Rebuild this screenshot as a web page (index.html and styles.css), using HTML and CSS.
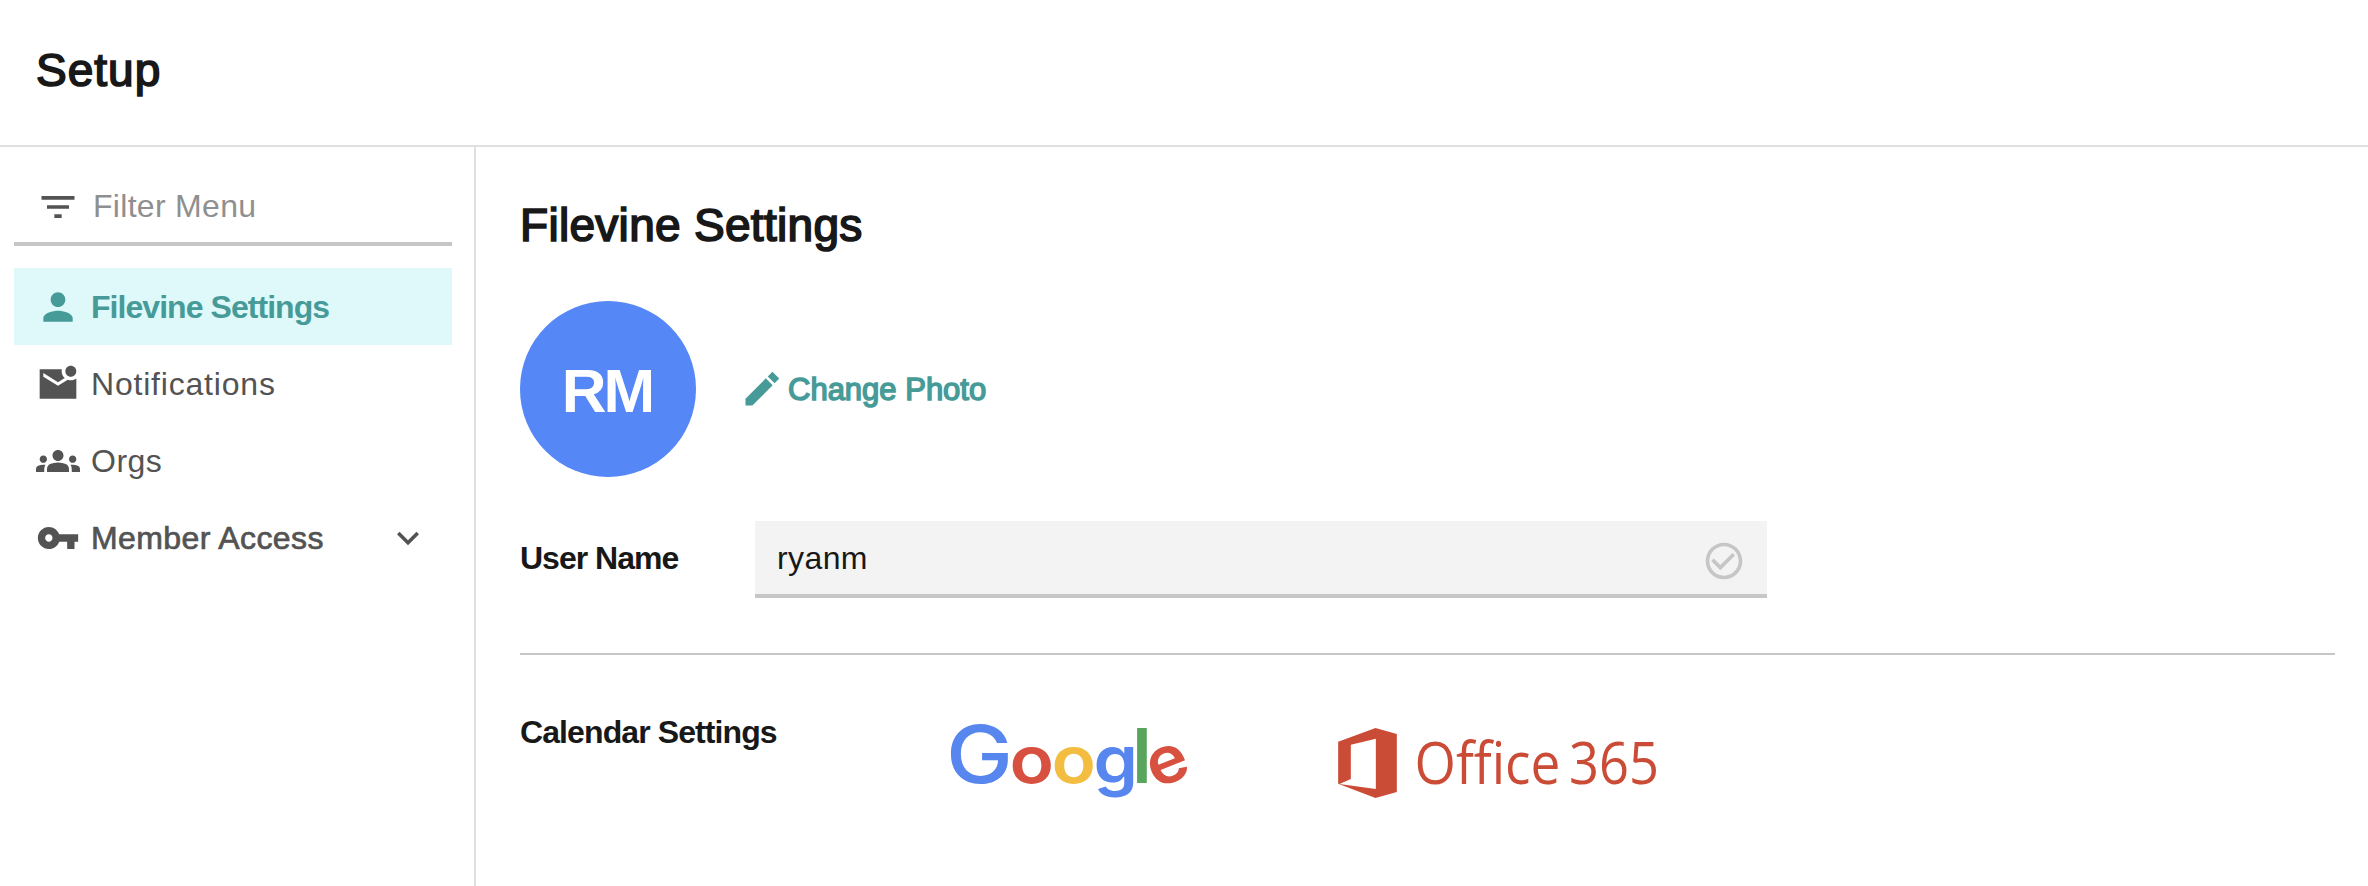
FILE: index.html
```html
<!DOCTYPE html>
<html lang="en">
<head>
    <meta charset="UTF-8">
    <meta name="viewport" content="width=device-width, initial-scale=1.0">
    <title>Setup</title>
    <link rel="stylesheet" href="styles.css">
</head>
<body>
    <header class="header">
        <h1 class="title">Setup</h1>
    </header>

    <div class="layout">
        <nav class="sidebar">
            <label class="filter">
                <svg class="icon" viewBox="0 0 24 24"><path d="M10 18h4v-2h-4v2zM3 6v2h18V6H3zm3 7h12v-2H6v2z"/></svg>
                <input class="filter-input" type="text" placeholder="Filter Menu">
            </label>
            <a class="item active">
                <svg class="icon" viewBox="0 0 24 24"><path d="M12 12c2.21 0 4-1.79 4-4s-1.79-4-4-4-4 1.79-4 4 1.79 4 4 4zm0 2c-2.67 0-8 1.34-8 4v2h16v-2c0-2.66-5.33-4-8-4z"/></svg>
                <span>Filevine Settings</span>
            </a>
            <a class="item notifications">
                <svg class="icon" viewBox="0 0 24 24"><path d="M22 8.98V20H2V4h12.1c-.06.32-.1.66-.1 1 0 1.48.65 2.79 1.67 3.71L12 11 4 6v2l8 5 5.3-3.32c.54.2 1.1.32 1.7.32 1.13 0 2.16-.39 3-1.02zM16 5c0 1.66 1.34 3 3 3s3-1.34 3-3-1.34-3-3-3-3 1.34-3 3z"/></svg>
                <span>Notifications</span>
            </a>
            <a class="item">
                <svg class="icon" viewBox="0 0 24 24"><path d="M12 12.75c1.63 0 3.07.39 4.24.9 1.08.48 1.76 1.56 1.76 2.73V18H6v-1.61c0-1.18.68-2.26 1.76-2.73 1.17-.52 2.61-.91 4.24-.91zM4 13c1.1 0 2-.9 2-2s-.9-2-2-2-2 .9-2 2 .9 2 2 2zm1.13 1.1c-.37-.06-.74-.1-1.13-.1-.99 0-1.93.21-2.78.58C.48 14.9 0 15.62 0 16.43V18h4.5v-1.61c0-.83.23-1.61.63-2.29zM20 13c1.1 0 2-.9 2-2s-.9-2-2-2-2 .9-2 2 .9 2 2 2zm4 3.43c0-.81-.48-1.53-1.22-1.85-.85-.37-1.79-.58-2.78-.58-.39 0-.76.04-1.13.1.4.68.63 1.46.63 2.29V18H24v-1.57zM12 6c1.66 0 3 1.34 3 3s-1.34 3-3 3-3-1.34-3-3 1.34-3 3-3z"/></svg>
                <span>Orgs</span>
            </a>
            <a class="item group">
                <svg class="icon" viewBox="0 0 24 24"><path d="M12.65 10C11.83 7.67 9.61 6 7 6c-3.31 0-6 2.69-6 6s2.69 6 6 6c2.61 0 4.83-1.67 5.65-4H17v4h4v-4h2v-4H12.65zM7 14c-1.1 0-2-.9-2-2s.9-2 2-2 2 .9 2 2-.9 2-2 2z"/></svg>
                <span>Member Access</span>
                <svg class="icon chevron" viewBox="0 0 24 24"><path d="M16.59 8.59 12 13.17 7.41 8.59 6 10l6 6 6-6z"/></svg>
            </a>
        </nav>

        <main class="main">
            <h2 class="title">Filevine Settings</h2>

            <div class="photo">
                <div class="avatar">RM</div>
                <a class="change-photo">
                    <svg class="icon" viewBox="0 0 24 24"><path d="M3 17.25V21h3.75L17.81 9.94l-3.75-3.75L3 17.25zM21.41 6.34l-3.75-3.75-2.53 2.54 3.75 3.75 2.53-2.54z"/></svg>
                    <span>Change Photo</span>
                </a>
            </div>

            <div class="field">
                <label class="label" for="userName">User Name</label>
                <div class="input-box">
                    <input type="text" id="userName" value="ryanm">
                    <svg class="icon" viewBox="0 0 24 24"><path d="M16.59 7.58 10 14.17l-3.59-3.58L5 12l5 5 8-8zM12 2C6.48 2 2 6.48 2 12s4.48 10 10 10 10-4.48 10-10S17.52 2 12 2zm0 18c-4.42 0-8-3.58-8-8s3.58-8 8-8 8 3.58 8 8-3.58 8-8 8z"/></svg>
                </div>
            </div>

            <div class="calendar">
                <span class="label">Calendar Settings</span>
                <a class="google">
                    <svg width="250" height="100" viewBox="-8 -8 250 100">
                        <g class="google-text">
                            <text class="blue big" x="-4" y="62.5" textLength="67" lengthAdjust="spacingAndGlyphs">G</text>
                            <text class="red" x="59.5" y="62.5" textLength="44.5" lengthAdjust="spacingAndGlyphs">o</text>
                            <text class="yellow" x="101.5" y="62.5" textLength="44.5" lengthAdjust="spacingAndGlyphs">o</text>
                            <text class="blue" x="143.5" y="62.5" textLength="44.5" lengthAdjust="spacingAndGlyphs">g</text>
                            <text class="green tall" x="182" y="62.5">l</text>
                            <text class="red" x="197" y="62.5" textLength="41" lengthAdjust="spacingAndGlyphs" transform="rotate(-22 218 44)">e</text>
                        </g>
                    </svg>
                </a>
                <a class="office">
                    <svg width="59" height="70" viewBox="84 83 176 210"><path fill-rule="evenodd" d="M84 124 196 83l64 18v174l-64 18L84 250zM88 251l109 15V115l-75 18v103z"/></svg>
                    <svg width="280" height="70" viewBox="0 0 280 70">
                        <text class="office-text" x="17.5" y="56" textLength="146" lengthAdjust="spacingAndGlyphs">Office</text>
                        <text class="office-text" x="172" y="56" textLength="90" lengthAdjust="spacingAndGlyphs">365</text>
                    </svg>
                </a>
            </div>
        </main>
    </div>
</body>
</html>
```
FILE: styles.css
```css
* { box-sizing: border-box; }
body { font-family: "Liberation Sans", Arial, sans-serif; font-size: 32px; margin: 0; height: 886px; display: flex; flex-direction: column; background: #fff; color: #181818; overflow: hidden; }
input { font: inherit; color: inherit; letter-spacing: inherit; border: none; background: none; padding: 0; outline: none; min-width: 0; }
svg { display: block; flex: none; overflow: visible; }
.icon { width: 44px; height: 44px; fill: currentColor; }

.title { margin: 0; font-size: 46px; font-weight: normal; line-height: 56px; letter-spacing: 0.3px; -webkit-text-stroke: 1.7px #181818; }
.header { height: 147px; padding: 42px 36px 0; border-bottom: 2px solid #e0e0e0; flex: none; }
.header .title { letter-spacing: 1px; }
.layout { display: flex; flex: 1; }

.sidebar { width: 476px; padding: 22px 22px 0 14px; border-right: 2px solid #e0e0e0; color: #535353; }
.filter { display: flex; align-items: center; gap: 13px; height: 77px; padding: 2px 22px 0; border-bottom: 4px solid #c6c6c6; margin-bottom: 22px; letter-spacing: 0.3px; }
.filter-input { flex: 1; }
.filter-input::placeholder { color: #8f8f8f; opacity: 1; }
.item { display: flex; align-items: center; gap: 11px; height: 77px; padding: 0 22px; letter-spacing: 0.5px; }
.item span { padding-top: 2px; }
.item.active { background: #dff9fa; color: #469b99; font-weight: bold; letter-spacing: -0.95px; }
.item.notifications { letter-spacing: 0.8px; }
.item.group { letter-spacing: 0.4px; -webkit-text-stroke: 0.7px #535353; }
.chevron { margin-left: auto; }

.main { flex: 1; padding: 50px 33px 0 44px; }
.photo { display: flex; align-items: center; gap: 44px; margin-top: 48px; }
.avatar { width: 176px; height: 176px; padding: 2px 2px 0 0; border-radius: 50%; background: #5587f7; color: #fff; font-size: 62px; font-weight: bold; letter-spacing: -3px; display: flex; align-items: center; justify-content: center; }
.change-photo { display: flex; align-items: center; gap: 4px; color: #469b99; font-size: 31px; -webkit-text-stroke: 1.5px #469b99; }
.change-photo span { padding-top: 1px; }
.field { display: flex; margin-top: 44px; padding-bottom: 55px; border-bottom: 2px solid #c6c6c6; }
.label { width: 235px; font-weight: bold; letter-spacing: -1px; line-height: 74px; }
.input-box { display: flex; align-items: center; width: 1012px; height: 77px; padding: 0 21px 0 22px; background: #f3f3f3; border-bottom: 4px solid #c6c6c6; letter-spacing: 0.4px; }
.input-box input { flex: 1; padding-top: 2px; }
.input-box .icon { color: #c6c6c6; margin-top: 6px; }

.calendar { display: flex; align-items: flex-start; padding-top: 58px; }
.calendar .label { width: 422px; line-height: 38px; letter-spacing: -0.9px; }
.google { margin-top: -1px; width: 396px; }
.google-text { font-family: Inter, sans-serif; font-size: 66px; font-weight: 600; }
.big { font-size: 80px; font-weight: 500; }
.tall { font-size: 76px; }
.blue { fill: #5686ee; }
.red { fill: #d85140; }
.yellow { fill: #f3bd42; }
.green { fill: #58a55d; }
.office { display: flex; margin-top: 15px; fill: #cb4c36; }
.office-text { font-family: "Open Sans", sans-serif; font-size: 58px; font-variant-ligatures: none; }
```
